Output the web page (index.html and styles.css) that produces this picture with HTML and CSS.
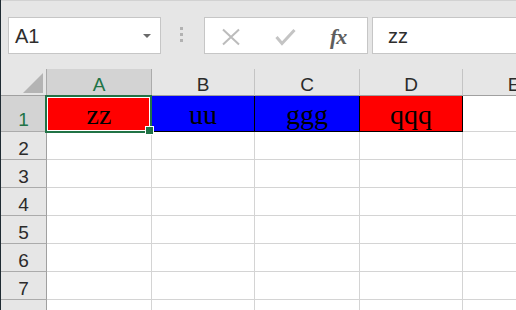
FILE: index.html
```html
<!DOCTYPE html>
<html>
<head>
<meta charset="utf-8">
<link rel="stylesheet" href="styles.css">
</head>
<body>
<div class="app">
  <div class="bar">
    <div class="namebox"><span class="ref">A1</span><span class="caret"></span></div>
    <div class="grip"><i></i><i></i><i></i></div>
    <div class="fbtns">
      <svg class="ic-x" width="20" height="18" viewBox="0 0 20 18"><path d="M2 1.5 L18 16.5 M18 1.5 L2 16.5" stroke="#bcbcbc" stroke-width="2" fill="none"/></svg>
      <svg class="ic-ok" width="21" height="18" viewBox="0 0 21 18"><path d="M1.5 9 L7 15.5 L19.5 2" stroke="#c4c4c4" stroke-width="3" fill="none"/></svg>
      <span class="fx">fx</span>
    </div>
    <div class="finput">zz</div>
  </div>
  <div class="sheet">
    <div class="corner"><span class="tri"></span></div>
    <div class="ch sel">A</div>
    <div class="ch">B</div>
    <div class="ch">C</div>
    <div class="ch">D</div>
    <div class="ch">E</div>

    <div class="rh sel">1</div>
    <div class="c red bk a1">zz<span class="selection"></span><span class="handle"></span></div>
    <div class="c blue bk">uu</div>
    <div class="c blue bk">ggg</div>
    <div class="c red bk">qqq</div>
    <div class="c"></div>

    <div class="rh">2</div><div class="c"></div><div class="c"></div><div class="c"></div><div class="c"></div><div class="c"></div>
    <div class="rh">3</div><div class="c"></div><div class="c"></div><div class="c"></div><div class="c"></div><div class="c"></div>
    <div class="rh">4</div><div class="c"></div><div class="c"></div><div class="c"></div><div class="c"></div><div class="c"></div>
    <div class="rh">5</div><div class="c"></div><div class="c"></div><div class="c"></div><div class="c"></div><div class="c"></div>
    <div class="rh">6</div><div class="c"></div><div class="c"></div><div class="c"></div><div class="c"></div><div class="c"></div>
    <div class="rh">7</div><div class="c"></div><div class="c"></div><div class="c"></div><div class="c"></div><div class="c"></div>
    <div class="rh">8</div><div class="c"></div><div class="c"></div><div class="c"></div><div class="c"></div><div class="c"></div>
  </div>
</div>
</body>
</html>
```
FILE: styles.css
```css
* { box-sizing: border-box; }
html, body { margin: 0; padding: 0; background: #e6e6e6; }
body { width: 516px; height: 310px; overflow: hidden; font-family: "Liberation Sans", Arial, sans-serif; }

.app {
  width: 516px;
  height: 310px;
  border-left: 1px solid #1f2b33;
  background: #e6e6e6;
  overflow: hidden;
}

.bar {
  height: 69px;
  border-top: 1px solid #d2d2d2;
  display: flex;
  align-items: flex-start;
  padding-top: 16px;
  padding-left: 7px;
}

.namebox {
  width: 153px;
  height: 37px;
  background: #fff;
  border: 1px solid #c6c6c6;
  display: flex;
  align-items: flex-start;
  justify-content: space-between;
  padding: 8px 9px 0 6px;
}
.ref { font-size: 20px; line-height: 20px; color: #2d2d2d; }
.caret {
  margin-top: 8px;
  width: 0; height: 0;
  border-left: 4px solid transparent;
  border-right: 4px solid transparent;
  border-top: 4px solid #6a6a6a;
}

.grip {
  margin-left: 19px;
  margin-top: 10px;
  display: flex;
  flex-direction: column;
  gap: 3px;
}
.grip i { display: block; width: 3px; height: 3px; background: #b2b2b2; }

.fbtns {
  margin-left: 21px;
  width: 164px;
  height: 37px;
  background: #fff;
  border: 1px solid #c6c6c6;
  display: flex;
  align-items: center;
  padding-left: 16px;
}
.ic-x { margin-top: 2px; }
.ic-ok { margin-left: 34px; margin-top: 2px; }
.fx {
  margin-left: 34px;
  font-family: "Liberation Serif", "Times New Roman", serif;
  font-style: italic;
  font-weight: bold;
  font-size: 22px;
  line-height: 22px;
  color: #5e5e5e;
  letter-spacing: -1px;
  margin-top: 2px;
}

.finput {
  margin-left: 4px;
  flex: 1;
  height: 37px;
  background: #fff;
  border: 1px solid #c6c6c6;
  border-right: none;
  font-size: 20px;
  line-height: 20px;
  color: #2d2d2d;
  padding: 8px 0 0 15px;
}

.sheet {
  display: grid;
  width: 565px;
  grid-template-columns: 46px 105px 103px 105px 103px 103px;
  grid-template-rows: 27px 36px repeat(7, 28px);
  background: #fff;
}

.corner {
  background: #e6e6e6;
  border-right: 1px solid #a9a9a9;
  border-bottom: 1px solid #a0a0a0;
  position: relative;
}
.tri {
  position: absolute;
  left: 22px; top: 4px;
  width: 0; height: 0;
  border-left: 20px solid transparent;
  border-bottom: 20px solid #b4b4b4;
}

.ch {
  background: #e6e6e6;
  border-right: 1px solid #c4c4c4;
  border-bottom: 1px solid #a0a0a0;
  font-size: 19px;
  line-height: 19px;
  color: #2b2b2b;
  text-align: center;
  padding-top: 6px;
}
.ch.sel { background: #d3d3d3; color: #217346; border-right-color: #ababab; }

.rh {
  background: #e6e6e6;
  border-right: 1px solid #a0a0a0;
  border-bottom: 1px solid #ababab;
  font-size: 19px;
  line-height: 19px;
  color: #2b2b2b;
  display: flex;
  align-items: flex-end;
  justify-content: center;
  padding-bottom: 1px;
}
.rh.sel { background: #d3d3d3; color: #217346; padding-bottom: 2px; }

.c {
  border-right: 1px solid #d4d4d4;
  border-bottom: 1px solid #d4d4d4;
  font-family: "Liberation Serif", "Times New Roman", serif;
  font-size: 28px;
  line-height: 28px;
  color: #000;
  display: flex;
  align-items: flex-end;
  justify-content: center;
  padding-bottom: 2px;
}
.c.red { background: #ff0000; }
.c.blue { background: #0000ff; }
.c.bk { border-right-color: #000; border-bottom-color: #000; }

.a1 { position: relative; }
.selection {
  position: absolute;
  left: -2px; top: -1px;
  width: 107px; height: 38px;
  border: 2px solid #217346;
  box-shadow: inset 0 0 0 1px #fff;
}
.handle {
  position: absolute;
  left: 99px; top: 31px;
  width: 7px; height: 7px;
  background: #217346;
  box-shadow: 0 0 0 1px #fff;
}
```
